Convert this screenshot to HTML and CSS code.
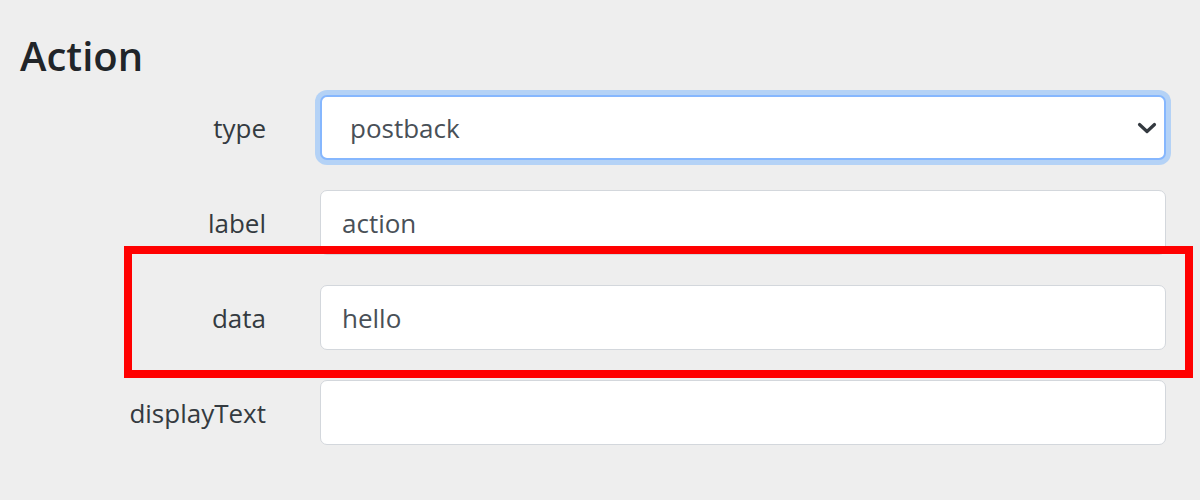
FILE: index.html
```html
<!DOCTYPE html>
<html>
<head>
<meta charset="utf-8">
<link rel="stylesheet" href="styles.css">
</head>
<body>
<div class="page">
  <h2 class="title">Action</h2>
  <div class="form">
    <div class="row">
      <label class="lbl">type</label>
      <div class="select focus">
        <span class="select-text">postback</span>
        <svg class="chev" width="20" height="12" viewBox="0 0 20 12"><path d="M2.5 2.5 L10 9.5 L17.5 2.5" fill="none" stroke="#343a40" stroke-width="3.2" stroke-linecap="round" stroke-linejoin="round"/></svg>
      </div>
    </div>
    <div class="row">
      <label class="lbl">label</label>
      <input class="input" type="text" value="action">
    </div>
    <div class="row">
      <label class="lbl">data</label>
      <input class="input" type="text" value="hello">
      <div class="highlight"></div>
    </div>
    <div class="row">
      <label class="lbl">displayText</label>
      <input class="input" type="text" value="">
    </div>
  </div>
</div>
</body>
</html>
```
FILE: styles.css
```css
html, body {
  margin: 0;
  padding: 0;
  background: #eeeeee;
}
body {
  font-family: "Open Sans", "Noto Sans", sans-serif;
  color: #212529;
}
.page {
  padding: 26px 0 0 20px;
  width: 1146px;
}
.title {
  margin: 0;
  font-size: 40px;
  font-weight: 600;
  line-height: 60px;
  color: #212529;
}
.form {
  display: flex;
  flex-direction: column;
  gap: 30px;
  margin-top: 9px;
}
.row {
  position: relative;
  display: grid;
  grid-template-columns: 246px 846px;
  column-gap: 54px;
  align-items: center;
}
.lbl {
  text-align: right;
  font-size: 26px;
  color: #343a40;
}
.input, .select {
  box-sizing: border-box;
  height: 65px;
  width: 846px;
  margin: 0;
  border: 1.5px solid #d3d7dc;
  border-radius: 7px;
  background: #ffffff;
  padding: 0 21px;
  font-family: "Open Sans", "Noto Sans", sans-serif;
  font-size: 26px;
  color: #495057;
  outline: none;
}
.select {
  display: flex;
  align-items: center;
  justify-content: space-between;
  padding: 0 7px 0 28px;
}
.select.focus {
  border: 2px solid #86b7fe;
  box-shadow: 0 0 0 5px #b4d2f6;
}
.chev {
  display: block;
}
.highlight {
  position: absolute;
  top: -39px;
  bottom: -28px;
  left: 104px;
  right: -27px;
  border: 8px solid #ff0000;
  pointer-events: none;
}
```
